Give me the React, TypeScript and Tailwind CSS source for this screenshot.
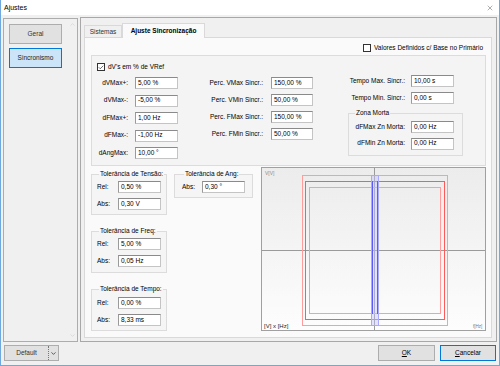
import React from 'react';
import { X, Check, ChevronUp, ChevronDown } from 'lucide-react';

function Input({ value, w = 'w-[43px]' }: { value: string; w?: string }) {
  return (
    <div
      className={`${w} h-[12px] bg-white border border-[#c4c4c4] border-t-[#8a8a8a] border-l-[#9a9a9a] flex items-center pl-[2px] whitespace-nowrap leading-none`}
    >
      {value}
    </div>
  );
}

function Label({ children }: { children: React.ReactNode }) {
  return <span className="justify-self-end whitespace-nowrap leading-none">{children}</span>;
}

function Checkbox({ checked, label }: { checked?: boolean; label: string }) {
  return (
    <div className="flex items-center gap-[3px] h-[8px]">
      <div className="w-[8px] h-[8px] bg-white border border-[#333333] flex items-center justify-center">
        {checked && <Check size={7} strokeWidth={2.5} className="text-[#222222]" />}
      </div>
      <span className="leading-none whitespace-nowrap">{label}</span>
    </div>
  );
}

function Group({
  title,
  className,
  children,
}: {
  title: string;
  className: string;
  children: React.ReactNode;
}) {
  return (
    <fieldset className={`border border-[#dcdcdc] bg-[#f5f5f5] ${className}`}>
      <legend className="ml-[2px] px-[1px] leading-[8px] whitespace-nowrap">{title}</legend>
      {children}
    </fieldset>
  );
}

function Chart() {
  return (
    <div className="w-[225px] h-[164px] border border-[#a0a0a0] bg-linear-to-b from-[#ececec] to-[#fdfdfd]">
      <svg width={223} height={162} viewBox="0 0 223 162">
        {/* axes */}
        <line x1={112.5} y1={0} x2={112.5} y2={162} stroke="#9a9a9a" strokeWidth={1} />
        <line x1={0} y1={82.5} x2={223} y2={82.5} stroke="#9a9a9a" strokeWidth={1} />
        {/* red limits (dotted ones drawn as light lines) */}
        <rect x={40.5} y={7.5} width={145} height={150} fill="none" stroke="#ff9c9c" strokeWidth={1} />
        <rect x={43.5} y={13.5} width={139} height={138} fill="none" stroke="#ff5a5a" strokeWidth={1} />
        <rect x={47.5} y={19.5} width={131} height={126} fill="none" stroke="#ff9c9c" strokeWidth={1} />
        {/* blue band */}
        <rect x={110} y={7} width={6} height={150} fill="#c4c4ff" opacity={0.45} />
        <rect x={109.5} y={7.5} width={7} height={150} fill="none" stroke="#a8a8ff" strokeWidth={1} />
        <line x1={110.5} y1={13} x2={110.5} y2={146} stroke="#5a5aff" strokeWidth={1} />
        <line x1={115.5} y1={13} x2={115.5} y2={146} stroke="#5a5aff" strokeWidth={1} />
        <text x={3} y={7} fontSize={5} fill="#8c8c8c" fontFamily="Liberation Sans, Arial, sans-serif">
          V[V]
        </text>
        <text x={2} y={160} fontSize={6} fill="#222222" fontFamily="Liberation Sans, Arial, sans-serif">
          [V] x [Hz]
        </text>
        <text x={211} y={160} fontSize={4.5} fill="#777777" fontFamily="Liberation Sans, Arial, sans-serif">
          f[Hz]
        </text>
      </svg>
    </div>
  );
}

export default function App() {
  return (
    <div className="w-[500px] h-[366px] bg-[#f0f0f0] border-x border-b border-[#6fa8dc] flex flex-col overflow-hidden font-['Liberation_Sans',Arial,sans-serif] text-[6.5px] text-black">
      {/* Title bar */}
      <div className="h-[15px] bg-white flex items-center justify-between pl-[3px] pr-[5px] shrink-0">
        <span className="text-[7px] leading-none">Ajustes</span>
        <X size={8} strokeWidth={1.2} className="text-[#333333]" />
      </div>

      {/* Body */}
      <div className="flex flex-col pl-[2px] pr-[1px] pt-[2px]">
        <div className="flex gap-[2px] h-[325px]">
          {/* Left nav */}
          <div className="w-[75px] mt-[1px] border border-[#acacac] flex">
            <div className="flex flex-col gap-[4px] pl-[5px] pt-[5px]">
              <div className="w-[53px] h-[20px] bg-[#e1e1e1] border border-[#adadad] flex items-center justify-center text-[#333333]">
                Geral
              </div>
              <div className="w-[53px] h-[20px] bg-[#cce4f7] border border-[#0078d7] flex items-center justify-center text-[#222222]">
                Sincronismo
              </div>
            </div>
            <div className="ml-auto w-[10px] flex flex-col items-center justify-between py-[2px] text-[#c2c2c2]">
              <ChevronUp size={7} strokeWidth={1.5} />
              <ChevronDown size={7} strokeWidth={1.5} />
            </div>
          </div>

          {/* Right panel */}
          <div className="w-[417px] border border-[#a8a8a8] pl-[3px] pr-[4px] pt-[5px] pb-[3px] flex flex-col">
            {/* tabs */}
            <div className="h-[14px] flex items-end">
              <div className="h-[12px] w-[38px] border border-b-0 border-[#d9d9d9] bg-[#f0f0f0] flex items-center justify-center text-[#333333]">
                Sistemas
              </div>
              <div className="h-[15px] w-[83px] -mb-px relative z-10 border border-b-0 border-[#d9d9d9] bg-[#fafafa] flex items-center justify-center font-bold">
                Ajuste Sincronização
              </div>
            </div>

            {/* tab page */}
            <div className="flex-1 border border-[#d9d9d9] bg-[#fafafa] pl-[6px] pr-[5px] pt-[6px] flex flex-col">
              <div className="flex justify-end pr-[3px]">
                <Checkbox label="Valores Definidos c/ Base no Primário" />
              </div>

              {/* main group */}
              <div className="mt-[3px] h-[111px] border border-[#dcdcdc] bg-[#f4f4f4] pl-[5px] pt-[7px]">
                <Checkbox checked label="dV's em % de VRef" />
                <div className="flex items-start mt-[6px]">
                  <div className="grid grid-cols-[31px_43px] gap-x-[7px] gap-y-[5.5px] items-center">
                    <Label>dVMax+:</Label>
                    <Input value="5,00 %" />
                    <Label>dVMax-:</Label>
                    <Input value="-5,00 %" />
                    <Label>dFMax+:</Label>
                    <Input value="1,00 Hz" />
                    <Label>dFMax-:</Label>
                    <Input value="-1,00 Hz" />
                    <Label>dAngMax:</Label>
                    <Input value="10,00 °" />
                  </div>

                  <div className="ml-[23px] grid grid-cols-[62px_42px] gap-x-[8px] gap-y-[5px] items-center">
                    <Label>Perc. VMax Sincr.:</Label>
                    <Input value="150,00 %" w="w-[42px]" />
                    <Label>Perc. VMin Sincr.:</Label>
                    <Input value="50,00 %" w="w-[42px]" />
                    <Label>Perc. FMax Sincr.:</Label>
                    <Input value="150,00 %" w="w-[42px]" />
                    <Label>Perc. FMin Sincr.:</Label>
                    <Input value="50,00 %" w="w-[42px]" />
                  </div>

                  <div className="ml-[35px] -mt-[2px] flex flex-col">
                    <div className="grid grid-cols-[57px_43px] gap-x-[6px] gap-y-[5px] items-center">
                      <Label>Tempo Max. Sincr.:</Label>
                      <Input value="10,00 s" />
                      <Label>Tempo Min. Sincr.:</Label>
                      <Input value="0,00 s" />
                    </div>
                    <fieldset className="mt-[5px] w-[115px] border border-[#dcdcdc] pl-[4px] pr-[8px] pt-[4px] pb-[5px]">
                      <legend className="ml-[2px] px-[1px] leading-[8px]">Zona Morta</legend>
                      <div className="grid grid-cols-[52px_43px] gap-x-[6px] gap-y-[4.5px] items-center">
                        <Label>dFMax Zn Morta:</Label>
                        <Input value="0,00 Hz" />
                        <Label>dFMin Zn Morta:</Label>
                        <Input value="0,00 Hz" />
                      </div>
                    </fieldset>
                  </div>
                </div>
              </div>

              {/* lower section */}
              <div className="flex items-start mt-[1px]">
                <div className="w-[76px] mt-[3px] flex flex-col gap-[12px]">
                  <Group title="Tolerância de Tensão:" className="h-[45px] pl-[5px] pt-[3px]">
                    <div className="grid grid-cols-[16px_43px] gap-x-[5px] gap-y-[5px] items-center">
                      <span className="leading-none">Rel:</span>
                      <Input value="0,50 %" />
                      <span className="leading-none">Abs:</span>
                      <Input value="0,30 V" />
                    </div>
                  </Group>
                  <Group title="Tolerância de Freq:" className="h-[46px] pl-[5px] pt-[3px]">
                    <div className="grid grid-cols-[16px_43px] gap-x-[5px] gap-y-[5px] items-center">
                      <span className="leading-none">Rel:</span>
                      <Input value="5,00 %" />
                      <span className="leading-none">Abs:</span>
                      <Input value="0,05 Hz" />
                    </div>
                  </Group>
                  <Group title="Tolerância de Tempo:" className="h-[46px] pl-[5px] pt-[4px]">
                    <div className="grid grid-cols-[16px_43px] gap-x-[5px] gap-y-[5px] items-center">
                      <span className="leading-none">Rel:</span>
                      <Input value="0,00 %" />
                      <span className="leading-none">Abs:</span>
                      <Input value="8,33 ms" />
                    </div>
                  </Group>
                </div>

                <Group title="Tolerância de Ang:" className="ml-[7px] mt-[3px] w-[79px] h-[28px] pl-[7px] pt-[3px]">
                  <div className="grid grid-cols-[15px_43px] gap-x-[5px] items-center">
                    <span className="leading-none">Abs:</span>
                    <Input value="0,30 °" />
                  </div>
                </Group>

                <div className="ml-[8px]">
                  <Chart />
                </div>
              </div>
            </div>
          </div>
        </div>

        {/* bottom bar */}
        <div className="mt-[3px] h-[16px] flex items-center justify-between pl-[1px] pr-[2px]">
          <div className="flex h-[16px] border border-[#adadad] bg-[#e1e1e1]">
            <div className="w-[43px] flex items-center justify-center text-[#333333]">Default</div>
            <div className="w-[10px] border-l border-dotted border-[#777777] flex items-center justify-center">
              <ChevronDown size={7} strokeWidth={2} />
            </div>
          </div>
          <div className="flex gap-[5px]">
            <div className="w-[57px] h-[16px] border border-[#adadad] bg-[#e1e1e1] flex items-center justify-center">
              <span>
                <span className="underline">O</span>K
              </span>
            </div>
            <div className="w-[56px] h-[16px] border border-[#0078d7] bg-[#e1e1e1] flex items-center justify-center">
              <span>
                <span className="underline">C</span>ancelar
              </span>
            </div>
          </div>
        </div>
      </div>
    </div>
  );
}
